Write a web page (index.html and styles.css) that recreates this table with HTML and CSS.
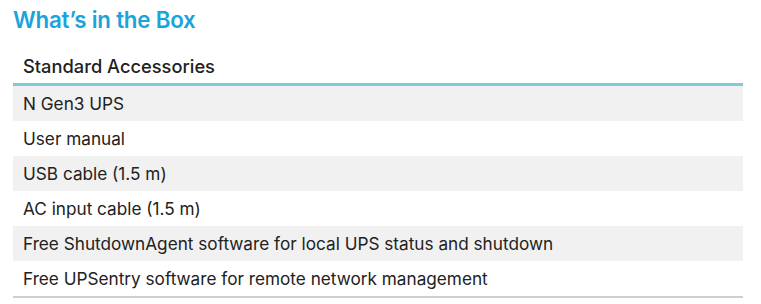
FILE: index.html
```html
<!DOCTYPE html>
<html lang="en">
<head>
    <meta charset="UTF-8">
    <title>What's in the Box</title>
    <link rel="stylesheet" href="styles.css">
</head>
<body>
    <div class="box">
        <h2 class="title">What’s in the Box</h2>
        <table class="specs">
            <thead>
                <tr><th>Standard Accessories</th></tr>
            </thead>
            <tbody>
                <tr><td>N Gen3 UPS</td></tr>
                <tr><td>User manual</td></tr>
                <tr><td>USB cable (1.5 m)</td></tr>
                <tr><td>AC input cable (1.5 m)</td></tr>
                <tr><td>Free ShutdownAgent software for local UPS status and shutdown</td></tr>
                <tr><td>Free UPSentry software for remote network management</td></tr>
            </tbody>
        </table>
    </div>
</body>
</html>
```
FILE: styles.css
```css
body {
    margin: 0;
    padding: 0;
    background: #fff;
    font-family: 'Inter', 'Liberation Sans', sans-serif;
    color: #222;
}
.box {
    padding: 7px 18px 0 13px;
}
.title {
    margin: 0 0 17px;
    font-size: 22.3px;
    line-height: 26px;
    font-weight: 600;
    color: #1ba3dc;
    letter-spacing: -0.2px;
}
.specs {
    width: 100%;
    border-collapse: collapse;
    border-bottom: 2px solid #cfcfcf;
}
.specs th {
    text-align: left;
    font-size: 18.3px;
    font-weight: 500;
    line-height: 33px;
    padding: 0 10px;
    border-bottom: 3px solid #84c9d8;
}
.specs td {
    font-size: 17.2px;
    line-height: 35px;
    padding: 0 10px;
}
.specs tbody tr:nth-child(odd) {
    background-color: #f1f1f1;
}
```
